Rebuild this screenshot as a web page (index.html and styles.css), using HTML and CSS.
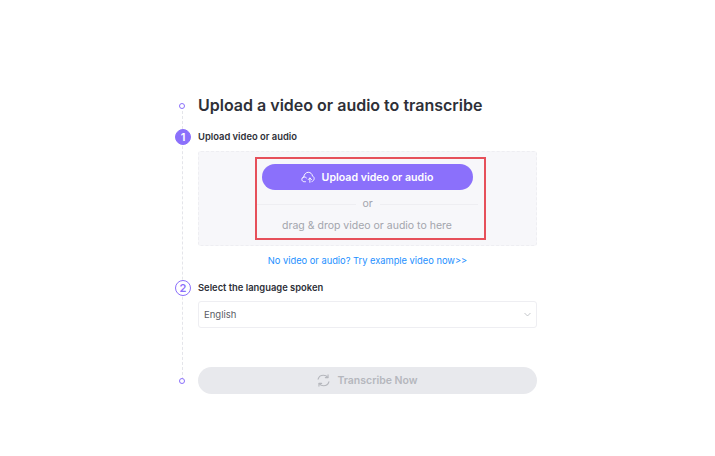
FILE: index.html
```html
<!DOCTYPE html>
<html lang="en">
<head>
    <meta charset="UTF-8">
    <title>Upload a video or audio to transcribe</title>
    <link rel="stylesheet" href="styles.css">
</head>
<body>
    <div class="container">
        <div class="timeline"></div>

        <div class="row title-row">
            <div class="marker"><span class="dot"></span></div>
            <h1>Upload a video or audio to transcribe</h1>
        </div>

        <div class="row label-row first">
            <div class="marker"><span class="num active">1</span></div>
            <h2>Upload video or audio</h2>
        </div>
        <div class="row">
            <div class="marker"></div>
            <div class="content">
                <div class="dropzone">
                    <div class="highlight">
                        <button class="upload-btn">
                            <svg width="14" height="12" viewBox="0 0 16 14" fill="none" stroke="#fff" stroke-width="1.1" stroke-linecap="round" stroke-linejoin="round">
                                <path d="M5 12.5H3.6C2 12.5 .8 11.3 .8 9.8c0-1.4 1-2.5 2.3-2.7C3.3 4 5.6 1.5 8.3 1.5c2.6 0 4.6 1.9 4.9 4.4 1.2.4 2 1.6 2 2.9 0 1.6-1.1 3-2.6 3.5"/>
                                <path d="M1.6 8C3 6.6 5 6.7 6.2 8"/>
                                <path d="M10.2 13.2V8.2M8.3 10l1.9-1.9 1.9 1.9"/>
                            </svg>
                            Upload video or audio
                        </button>
                        <div class="or"><span>or</span></div>
                        <div class="drag-text">drag &amp; drop video or audio to here</div>
                    </div>
                </div>
                <a class="example-link" href="#">No video or audio? Try example video now&gt;&gt;</a>
            </div>
        </div>

        <div class="row label-row second">
            <div class="marker"><span class="num">2</span></div>
            <h2>Select the language spoken</h2>
        </div>
        <div class="row">
            <div class="marker"></div>
            <div class="content">
                <div class="select">
                    <span>English</span>
                    <svg width="7" height="5" viewBox="0 0 8 5" fill="none" stroke="#b4b7bd" stroke-width="0.9"><path d="M.6.8 4 4.2 7.4.8"/></svg>
                </div>
            </div>
        </div>

        <div class="row action-row">
            <div class="marker"><span class="dot"></span></div>
            <button class="transcribe-btn">
                <svg width="13" height="13" viewBox="0 0 14 14" fill="none" stroke="#b5b7bd" stroke-width="1.2" stroke-linecap="round" stroke-linejoin="round">
                    <path d="M1.2 5.6C1.9 3 4.2 1.4 6.9 1.4c1.9 0 3.6.8 4.7 2.3"/>
                    <path d="M11.9 1v2.9H9"/>
                    <path d="M12.8 8.4c-.7 2.6-3 4.2-5.7 4.2-1.9 0-3.6-.8-4.7-2.3"/>
                    <path d="M2.1 13v-2.9H5"/>
                </svg>
                Transcribe Now
            </button>
        </div>
    </div>
</body>
</html>
```

FILE: styles.css
```css
body {
    margin: 0;
    background: #ffffff;
    font-family: "Inter", "Liberation Sans", sans-serif;
    color: #2e3038;
}

button {
    font-family: inherit;
    border: 0;
    display: flex;
    justify-content: center;
    align-items: center;
    width: 100%;
}

.container {
    position: relative;
    width: 362px;
    margin-left: 175px;
    padding-top: 94px;
}

.timeline {
    position: absolute;
    left: 7px;
    top: 106px;
    height: 274px;
    border-left: 1px dashed #e4e5ea;
}

.row {
    position: relative;
    display: flex;
    align-items: flex-start;
}

.marker {
    flex: 0 0 23px;
    width: 23px;
    display: flex;
    justify-content: flex-start;
}

.content {
    flex: 1;
}

.title-row {
    height: 23px;
    align-items: center;
}

.title-row .marker,
.action-row .marker {
    padding-left: 4px;
    box-sizing: border-box;
}

.dot {
    width: 4px;
    height: 4px;
    border: 1px solid #8b70fb;
    border-radius: 50%;
    background: #ffffff;
}

h1 {
    margin: 0;
    font-size: 16px;
    line-height: 23px;
    font-weight: 600;
}

h2 {
    margin: 0;
    font-size: 9.4px;
    line-height: 16px;
    font-weight: 600;
}

.label-row {
    align-items: center;
    height: 16px;
}

.label-row.first {
    margin-top: 12px;
    margin-bottom: 6px;
}

.label-row.second {
    margin-top: 13px;
    margin-bottom: 5px;
}

.num {
    width: 16px;
    height: 16px;
    box-sizing: border-box;
    border-radius: 50%;
    border: 1px solid #8b70fb;
    background: #ffffff;
    color: #8b70fb;
    font-size: 11px;
    font-weight: 600;
    line-height: 14px;
    text-align: center;
}

.num.active {
    background: #8b70fb;
    color: #ffffff;
}

.dropzone {
    height: 95px;
    box-sizing: border-box;
    background: #f7f7fa;
    border: 1px dashed #eeeef2;
    border-radius: 3px;
    padding-top: 5px;
    display: flex;
    justify-content: center;
}

.highlight {
    width: 231px;
    height: 83px;
    margin-left: 5px;
    box-sizing: border-box;
    border: 2px solid #e6505a;
    padding: 5px 11px 0 5px;
}

.upload-btn {
    height: 26px;
    gap: 7px;
    border-radius: 13px;
    background: #8b70fb;
    color: #ffffff;
    font-size: 10.6px;
    font-weight: 600;
}

.or {
    margin: 7px -5px 0;
    display: flex;
    align-items: center;
    gap: 7px;
    color: #a3a5ad;
    font-size: 10.5px;
    line-height: 14px;
}

.or::before,
.or::after {
    content: "";
    flex: 1;
    border-top: 1px solid #eeeef2;
}

.or::before {
    flex: 0 0 99px;
}

.drag-text {
    margin-top: 8px;
    text-align: center;
    color: #a3a5ad;
    font-size: 10.5px;
    line-height: 14px;
    white-space: nowrap;
}

.example-link {
    display: block;
    margin-top: 8px;
    text-align: center;
    color: #1e90ff;
    font-size: 9.3px;
    line-height: 13px;
    text-decoration: none;
}

.select {
    height: 27px;
    box-sizing: border-box;
    border: 1px solid #eeeef2;
    border-radius: 3px;
    padding: 0 5px;
    display: flex;
    justify-content: space-between;
    align-items: center;
    color: #5b5d66;
    font-size: 9.5px;
}

.action-row {
    margin-top: 39px;
    align-items: center;
}

.transcribe-btn {
    flex: 1;
    width: auto;
    height: 27px;
    gap: 7px;
    border-radius: 14px;
    background: #e8e9ed;
    color: #b5b7bd;
    font-size: 10.5px;
    font-weight: 600;
}
```
